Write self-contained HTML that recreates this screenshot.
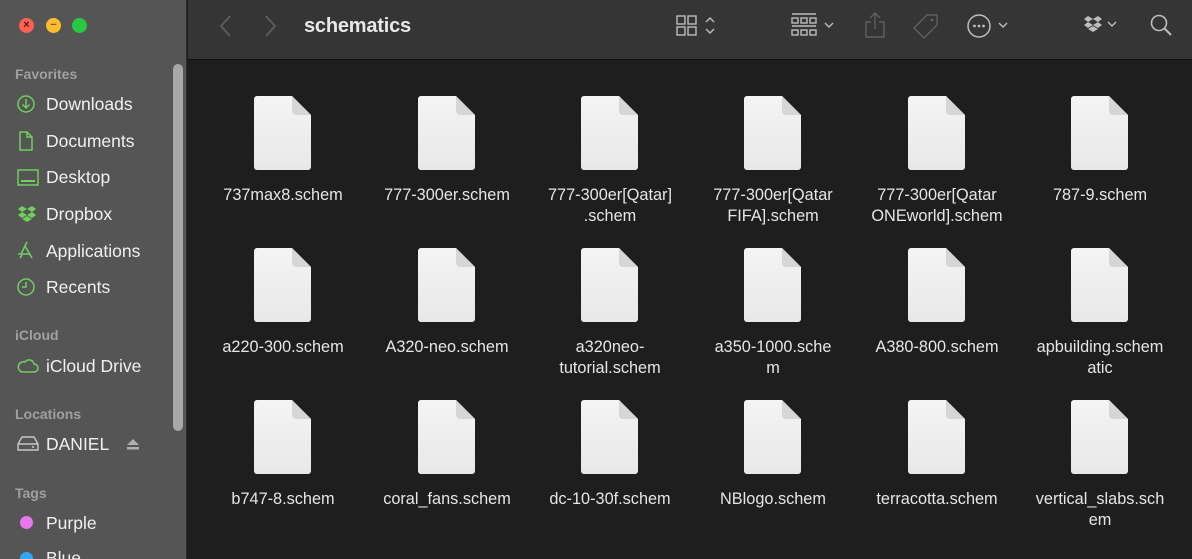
<!DOCTYPE html>
<html><head><meta charset="utf-8"><style>
*{margin:0;padding:0;box-sizing:border-box}
html,body{width:1192px;height:559px;overflow:hidden}
body{background:#1e1e1e;font-family:"Liberation Sans",sans-serif;position:relative}
#side{position:absolute;left:0;top:0;width:187px;height:559px;background:#555555;border-right:1px solid #2a2a2a;overflow:hidden}
.dot{position:absolute;top:18px;width:15px;height:15px;border-radius:50%;color:#5a1010;font-size:11px;line-height:15px;text-align:center;font-weight:bold}
.sec{position:absolute;left:15px;font-size:14px;color:#a0a0a0;font-weight:bold}
.it{position:absolute;left:46px;font-size:17.5px;color:#f0f0f0}
.ic{position:absolute;left:17px}
#scroll{position:absolute;left:173px;top:64px;width:10px;height:367px;border-radius:5px;background:#a8a8a8}
#tb{position:absolute;left:188px;top:0;right:0;height:60px;background:#353535;border-bottom:1px solid #111}
.t{position:absolute}
.f{position:absolute;width:160px;text-align:center;color:#e6e6e6;font-size:16.3px;line-height:21px}
.f svg{display:block;margin:0 auto 14px}
</style></head><body>
<div id="side">
<div class="dot" style="left:19px;background:#fe5f57">×</div>
<div class="dot" style="left:46px;background:#febc2e;color:#8a5a00">−</div>
<div class="dot" style="left:72px;background:#28c840"></div>
<div class="sec" style="top:66px">Favorites</div>
<svg class="ic" style="top:95px" width="18" height="18"><circle cx="9" cy="9" r="8" fill="none" stroke="#6fd05c" stroke-width="1.5"/><path d="M9 4v9M5.5 9.5L9 13l3.5-3.5" fill="none" stroke="#6fd05c" stroke-width="1.5"/></svg>
<div class="it" style="top:94px">Downloads</div>
<svg class="ic" style="top:131px" width="18" height="20"><path d="M3 1h7l5 5v13H3z M10 1v5h5" fill="none" stroke="#6fd05c" stroke-width="1.5"/></svg>
<div class="it" style="top:131px">Documents</div>
<svg class="ic" style="top:169px;left:17px" width="22" height="17"><rect x="1" y="1" width="20" height="15" fill="none" stroke="#6fd05c" stroke-width="1.5"/><rect x="4" y="11" width="14" height="2" fill="#6fd05c"/></svg>
<div class="it" style="top:167px">Desktop</div>
<svg class="ic" style="top:205px" width="20" height="17"><path d="M5 1L1 4l4 3 5-3zM15 1l-5 3 5 3 4-3zM1 10l4 3 5-3-5-3zM19 10l-4-3-5 3 5 3zM5 14l5 3 5-3-5-3z" fill="#6fd05c"/></svg>
<div class="it" style="top:204px">Dropbox</div>
<svg class="ic" style="top:241px" width="20" height="19"><path d="M10 1L4 13M8 5l7 12M1 13h12M3 17l2-3" fill="none" stroke="#6fd05c" stroke-width="1.6"/></svg>
<div class="it" style="top:241px">Applications</div>
<svg class="ic" style="top:278px" width="18" height="18"><circle cx="9" cy="9" r="8" fill="none" stroke="#6fd05c" stroke-width="1.5"/><path d="M9 4v5H5" fill="none" stroke="#6fd05c" stroke-width="1.5"/></svg>
<div class="it" style="top:277px">Recents</div>
<div class="sec" style="top:327px">iCloud</div>
<svg class="ic" style="top:357px" width="22" height="16"><path d="M5 15h12a4 4 0 0 0 0-8 5 5 0 0 0-9-2 4 4 0 0 0-3 10z" fill="none" stroke="#6fd05c" stroke-width="1.5"/></svg>
<div class="it" style="top:356px">iCloud Drive</div>
<div class="sec" style="top:406px">Locations</div>
<svg class="ic" style="top:436px" width="22" height="16"><path d="M1 8l4-7h12l4 7v6H1zM1 8h20" fill="none" stroke="#c8c8c8" stroke-width="1.4"/><circle cx="16" cy="11" r="1" fill="#c8c8c8"/></svg>
<div class="it" style="top:434px">DANIEL</div>
<svg style="position:absolute;left:127px;top:439px" width="12" height="11"><path d="M6 0l6 6H0z" fill="#b0b0b0"/><rect y="8" width="12" height="2.5" fill="#b0b0b0"/></svg>
<div class="sec" style="top:485px">Tags</div>
<div style="position:absolute;left:20px;top:516px;width:13px;height:13px;border-radius:50%;background:#e778ee"></div>
<div class="it" style="top:513px">Purple</div>
<div style="position:absolute;left:20px;top:552px;width:13px;height:13px;border-radius:50%;background:#2fa9f5"></div>
<div class="it" style="top:548px">Blue</div>
<div id="scroll"></div>
</div>
<div id="tb">
<svg class="t" style="left:30px;top:15px" width="14" height="22"><path d="M12 1L3 11l9 10" fill="none" stroke="#5e5e5e" stroke-width="1.8"/></svg>
<svg class="t" style="left:76px;top:15px" width="14" height="22"><path d="M2 1l9 10-9 10" fill="none" stroke="#5e5e5e" stroke-width="1.8"/></svg>
<div class="t" style="left:116px;top:15px;font-size:20px;font-weight:bold;color:#e8e8e8;letter-spacing:-0.2px">schematics</div>
<svg class="t" style="left:488px;top:15px" width="44" height="22"><g fill="none" stroke="#bdbdbd" stroke-width="1.4"><rect x="1" y="1" width="8" height="8"/><rect x="12" y="1" width="8" height="8"/><rect x="1" y="12" width="8" height="8"/><rect x="12" y="12" width="8" height="8"/><path d="M30 7l4-4 4 4M30 14l4 4 4-4"/></g></svg>
<svg class="t" style="left:603px;top:13px" width="48" height="26"><g fill="none" stroke="#bdbdbd" stroke-width="1.4"><path d="M1 1h24M1 13h24"/><rect x="1" y="5" width="6" height="5"/><rect x="10" y="5" width="6" height="5"/><rect x="19" y="5" width="6" height="5"/><rect x="1" y="17" width="6" height="5"/><rect x="10" y="17" width="6" height="5"/><rect x="19" y="17" width="6" height="5"/><path d="M34 10l4 4 4-4"/></g></svg>
<svg class="t" style="left:676px;top:11px" width="22" height="28"><g fill="none" stroke="#606060" stroke-width="1.4"><path d="M11 2v16M6 7l5-5 5 5M7 11H2v15h18V11h-5"/></g></svg>
<svg class="t" style="left:724px;top:13px" width="28" height="28"><path d="M15 2h10v10L12 25 2 15z" fill="none" stroke="#606060" stroke-width="1.4"/><circle cx="20" cy="7" r="1.5" fill="#606060"/></svg>
<svg class="t" style="left:778px;top:13px" width="48" height="26"><circle cx="13" cy="13" r="11" fill="none" stroke="#bdbdbd" stroke-width="1.5"/><circle cx="8.5" cy="13" r="1.4" fill="#bdbdbd"/><circle cx="13" cy="13" r="1.4" fill="#bdbdbd"/><circle cx="17.5" cy="13" r="1.4" fill="#bdbdbd"/><path d="M33 10l4 4 4-4" fill="none" stroke="#bdbdbd" stroke-width="1.4"/></svg>
<svg class="t" style="left:895px;top:15px" width="42" height="22"><path d="M5 1L1 4l4 3 5-3zM15 1l-5 3 5 3 4-3zM1 10l4 3 5-3-5-3zM19 10l-4-3-5 3 5 3zM5 14l5 3 5-3-5-3z" fill="#bdbdbd"/><path d="M25 7l4 4 4-4" fill="none" stroke="#bdbdbd" stroke-width="1.4"/></svg>
<svg class="t" style="left:962px;top:14px" width="24" height="24"><circle cx="9" cy="9" r="7.5" fill="none" stroke="#bdbdbd" stroke-width="1.6"/><path d="M14.5 14.5L21 21" stroke="#bdbdbd" stroke-width="2"/></svg>
</div>
<div id="grid"></div>
<script>
const names=[["737max8.schem","777-300er.schem","777-300er[Qatar]<br>.schem","777-300er[Qatar<br>FIFA].schem","777-300er[Qatar<br>ONEworld].schem","787-9.schem"],
["a220-300.schem","A320-neo.schem","a320neo-<br>tutorial.schem","a350-1000.sche<br>m","A380-800.schem","apbuilding.schem<br>atic"],
["b747-8.schem","coral_fans.schem","dc-10-30f.schem","NBlogo.schem","terracotta.schem","vertical_slabs.sch<br>em"]];
const xs=[283,447,610,773,937,1100];let h="";
names.forEach((r,ri)=>r.forEach((n,ci)=>{
h+=`<div class="f" style="left:${xs[ci]-80}px;top:${96+ri*152}px"><svg width="58" height="75"><defs><linearGradient id="g" x1="0" y1="0" x2="0" y2="1"><stop offset="0" stop-color="#f4f4f4"/><stop offset="1" stop-color="#e8e8e8"/></linearGradient></defs><path d="M3 0h35l19 19v52a3 3 0 0 1-3 3H3a3 3 0 0 1-3-3V3a3 3 0 0 1 3-3z" fill="url(#g)"/><path d="M38 0v15a4 4 0 0 0 4 4h15z" fill="#d6d6d6"/></svg><div>${n}</div></div>`;}));
document.getElementById("grid").innerHTML=h;
</script>
</body></html>
